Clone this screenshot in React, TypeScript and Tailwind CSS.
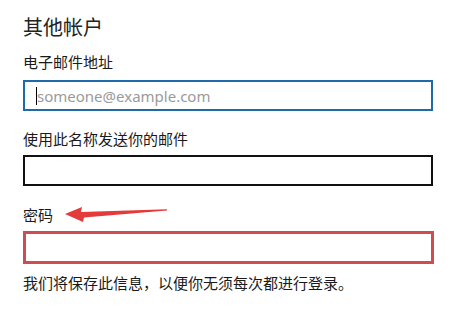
export default function App() {
  return (
    <div className="relative w-[455px] h-[314px] bg-white overflow-hidden font-['Noto_Sans_CJK_SC','Noto_Sans',sans-serif] text-[#1a1a1a]">
      <div className="flex flex-col pl-[23px] pt-[13px]">
        {/* Heading */}
        <h1 className="text-[20px] leading-[28px] text-[#222]">其他帐户</h1>

        {/* Email */}
        <label className="mt-[11px] text-[15px] leading-[20px]">电子邮件地址</label>
        <div className="mt-[8px] flex h-[31px] w-[410px] items-center border-2 border-[#1f6aa8] pl-[11px]">
          <span className="h-[18px] w-px bg-black" />
          <span className="text-[15px] leading-[20px] text-[#9a9a9a] font-['Noto_Sans',sans-serif]">someone@example.com</span>
        </div>

        {/* Display name */}
        <label className="mt-[18px] text-[15px] leading-[20px]">使用此名称发送你的邮件</label>
        <div className="mt-[6px] h-[31px] w-[410px] border-2 border-[#111]" />

        {/* Password */}
        <label className="mt-[19px] text-[15px] leading-[20px]">密码</label>
        <div className="mt-[6px] h-[33px] w-[411px] border-[3px] border-[#cf4d4f]" />

        <p className="mt-[9px] text-[15px] leading-[20px]">
          我们将保存此信息，以便你无须每次都进行登录。
        </p>
      </div>

      {/* Annotation arrow */}
      <svg
        className="absolute left-[60px] top-[200px]"
        width="110"
        height="26"
        viewBox="0 0 110 26"
      >
        <polygon
          points="5,14 22,7 21,12 107,9.3 107,10.6 24,17.5 23,22"
          fill="#e43a3a"
        />
      </svg>
    </div>
  );
}
